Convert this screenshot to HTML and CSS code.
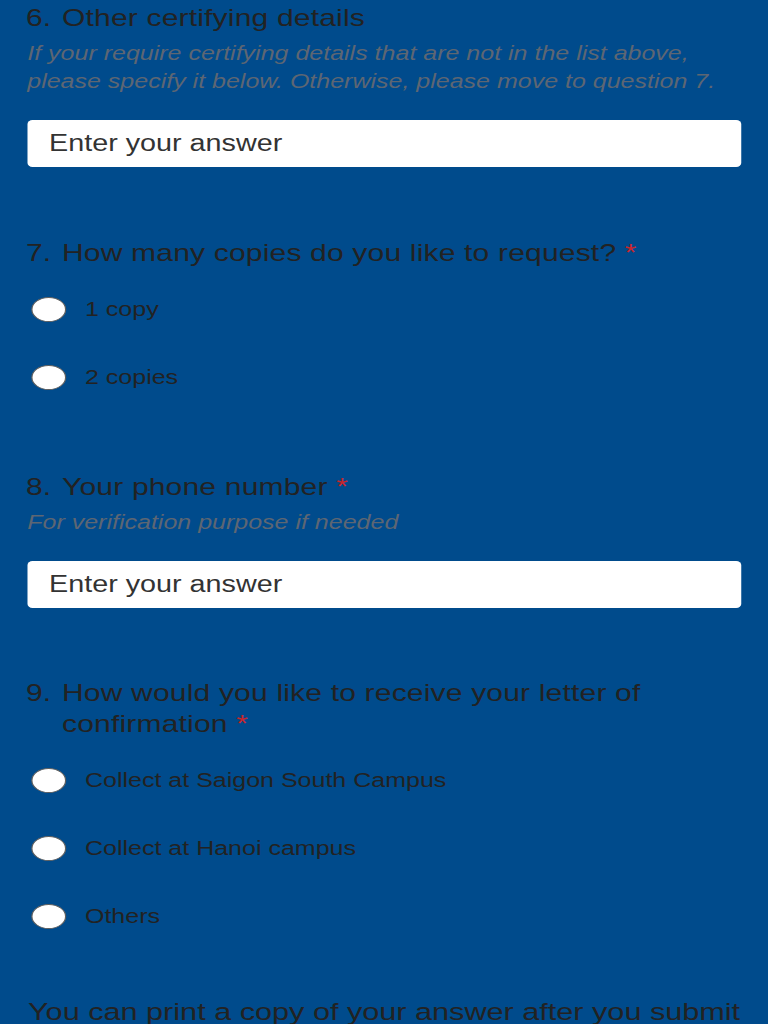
FILE: index.html
```html
<!DOCTYPE html>
<html lang="en">
<head>
    <meta charset="UTF-8">
    <meta name="viewport" content="width=device-width, initial-scale=1.0">
    <title>Letter of confirmation request</title>
    <link rel="stylesheet" href="styles.css">
</head>
<body>
    <!-- the captured page is stretched sideways, so the form is scaled on x only -->
    <div class="form">
        <div class="questions">
            <div class="question">
                <div class="q-title"><span class="q-num">6.</span><span class="q-text">Other certifying details</span></div>
                <p class="q-desc">If your require certifying details that are not in the list above, please specify it below. Otherwise, please move to question 7.</p>
                <input class="answer" type="text" placeholder="Enter your answer">
            </div>

            <div class="question">
                <div class="q-title"><span class="q-num">7.</span><span class="q-text">How many copies do you like to request? <span class="required">*</span></span></div>
                <div class="choices">
                    <label class="choice"><span class="radio"></span>1 copy</label>
                    <label class="choice"><span class="radio"></span>2 copies</label>
                </div>
            </div>

            <div class="question">
                <div class="q-title"><span class="q-num">8.</span><span class="q-text">Your phone number <span class="required">*</span></span></div>
                <p class="q-desc">For verification purpose if needed</p>
                <input class="answer" type="text" placeholder="Enter your answer">
            </div>

            <div class="question">
                <div class="q-title"><span class="q-num">9.</span><span class="q-text">How would you like to receive your letter of confirmation <span class="required">*</span></span></div>
                <div class="choices">
                    <label class="choice"><span class="radio"></span>Collect at Saigon South Campus</label>
                    <label class="choice"><span class="radio"></span>Collect at Hanoi campus</label>
                    <label class="choice"><span class="radio"></span>Others</label>
                </div>
            </div>
        </div>

        <p class="print-note">You can print a copy of your answer after you submit</p>
    </div>
</body>
</html>
```

FILE: styles.css
```css
body {
    margin: 0;
    background-color: #004b8c;
    font-family: "Liberation Sans", Arial, sans-serif;
    color: #222;
    overflow: hidden;
}
.form {
    width: 614px;
    box-sizing: border-box;
    padding: 2px 0 0 20.8px;
    transform: scaleX(1.25);
    transform-origin: 0 0;
}
.questions {
    display: flex;
    flex-direction: column;
    gap: 69.5px;
}
.q-title {
    display: flex;
    font-size: 24px;
    line-height: 31px;
}
.q-num {
    flex: 0 0 28.8px;
}
.q-text {
    letter-spacing: 0.15px;
}
.required {
    color: #c8262c;
}
.q-desc {
    margin: 6px 0 0 1px;
    font-size: 20px;
    line-height: 28px;
    font-style: italic;
    color: #5d6673;
}
.answer {
    display: block;
    box-sizing: border-box;
    width: 571px;
    height: 47px;
    margin: 25px 0 0 0.8px;
    padding: 0 17.6px;
    border: none;
    border-radius: 4px;
    background-color: #fff;
    font-family: inherit;
    font-size: 23px;
    color: #333;
}
.answer::placeholder {
    color: #333;
    opacity: 1;
}
.choices {
    display: flex;
    flex-direction: column;
    gap: 20px;
    margin-top: 17.5px;
}
.choice {
    display: flex;
    align-items: center;
    height: 48px;
    font-size: 20px;
    color: #222;
}
.radio {
    box-sizing: border-box;
    width: 28px;
    height: 25px;
    margin: 0 15.2px 0 4px;
    border: 1.6px solid #5f5f5f;
    border-radius: 50%;
    background-color: #fff;
}
.print-note {
    margin: 55.5px 0 0 1.6px;
    font-size: 24.5px;
    line-height: 31px;
}
```
